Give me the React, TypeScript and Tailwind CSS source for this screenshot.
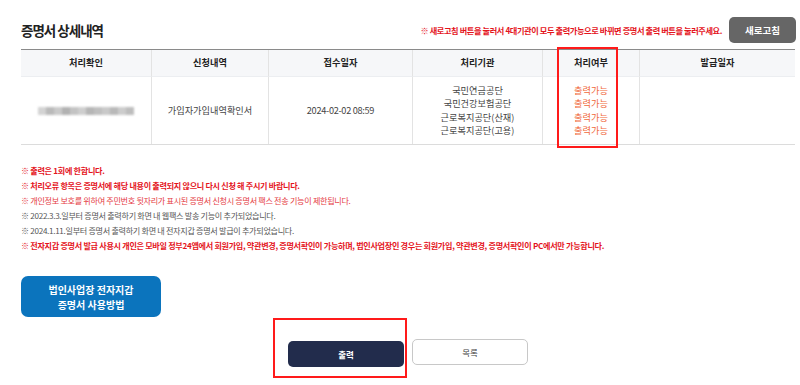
const font = "font-['Noto_Sans_CJK_KR','Noto_Sans',sans-serif]";

const agencies = ["국민연금공단", "국민건강보험공단", "근로복지공단(산재)", "근로복지공단(고용)"];

const notes: { text: string; cls: string }[] = [
  { text: "※ 출력은 1회에 한합니다.", cls: "text-[#e4141c] font-bold" },
  { text: "※ 처리오류 항목은 증명서에 해당 내용이 출력되지 않으니 다시 신청 해 주시기 바랍니다.", cls: "text-[#e4141c] font-bold" },
  { text: "※ 개인정보 보호를 위하여 주민번호 뒷자리가 표시된 증명서 신청시 증명서 팩스 전송 기능이 제한됩니다.", cls: "text-[#e53a3f]" },
  { text: "※ 2022.3.3.일부터 증명서 출력하기 화면 내 웹팩스 발송 기능이 추가되었습니다.", cls: "text-[#555]" },
  { text: "※ 2024.1.11.일부터 증명서 출력하기 화면 내 전자지갑 증명서 발급이 추가되었습니다.", cls: "text-[#555]" },
  {
    text: "※ 전자지갑 증명서 발급 사용시 개인은 모바일 정부24앱에서 회원가입, 약관변경, 증명서확인이 가능하며, 법인사업장인 경우는 회원가입, 약관변경, 증명서확인이 PC에서만 가능합니다.",
    cls: "text-[#e4141c] font-bold",
  },
];

const redacted = ["#c9c9c9", "#a9a9a9", "#bdbdbd", "#9f9f9f", "#b5b5b5", "#c3c3c3", "#a4a4a4", "#b0b0b0", "#bcbcbc", "#a8a8a8", "#c0c0c0", "#adadad"];

export default function App() {
  return (
    <div className={`${font} w-[800px] h-[385px] bg-white overflow-hidden`}>
      <div className="ml-[21px] w-[774px]">
        {/* heading row */}
        <div className="flex items-center h-[26px] mt-[17px]">
          <h1 className="text-[13.5px] font-bold text-[#222] tracking-[-1px]">증명서 상세내역</h1>
          <p className="ml-auto text-[8.2px] font-bold text-[#e4141c] tracking-[-0.4px]">
            ※ 새로고침 버튼을 눌러서 4대기관이 모두 출력가능으로 바뀌면 증명서 출력 버튼을 눌러주세요.
          </p>
          <button className="ml-[7px] mr-[-1px] w-[67px] h-[26px] rounded-[5px] bg-[#666] text-white text-[9.5px] font-bold">
            새로고침
          </button>
        </div>

        {/* table */}
        <div className="relative mt-[6px]">
          <div className="grid grid-cols-[130px_117px_144px_130px_97px_156px] border-t border-[#8a8a8a] border-b border-b-[#dcdcdc] text-[9.2px]">
            {["처리확인", "신청내역", "접수일자", "처리기관", "처리여부", "발급일자"].map((h, i) => (
              <div
                key={h}
                className={`h-[27px] flex items-center justify-center bg-[#f6f7f9] font-bold text-[#222] border-b border-[#eceef1] ${
                  i > 0 ? "border-l border-l-[#e3e3e3]" : ""
                }`}
              >
                {h}
              </div>
            ))}
            <div className="h-[67px] flex items-center justify-center">
              <div className="flex w-[97px] h-[8px] blur-[1px] opacity-80">
                {redacted.map((c, i) => (
                  <span key={i} className="flex-1" style={{ backgroundColor: c }} />
                ))}
              </div>
            </div>
            <div className="flex items-center justify-center border-l border-[#e3e3e3] text-[#444]">가입자가입내역확인서</div>
            <div className="flex items-center justify-center border-l border-[#e3e3e3] text-[#444] tracking-[-0.3px]">2024-02-02 08:59</div>
            <div className="flex flex-col items-center justify-center border-l border-[#e3e3e3] text-[#444] leading-[13.5px]">
              {agencies.map((a) => (
                <span key={a}>{a}</span>
              ))}
            </div>
            <div className="flex flex-col items-center justify-center border-l border-[#e3e3e3] text-[#f0683a] leading-[13.5px]">
              {agencies.map((a) => (
                <span key={a}>출력가능</span>
              ))}
            </div>
            <div className="border-l border-[#e3e3e3]" />
          </div>
          <span className="absolute left-[536px] top-[-2px] w-[61px] h-[101px] border-2 border-[#ff1a1a]" />
        </div>

        {/* notes */}
        <ul className="mt-[18px] text-[8.1px] leading-[15px] tracking-[-0.3px]">
          {notes.map((n) => (
            <li key={n.text} className={n.cls}>
              {n.text}
            </li>
          ))}
        </ul>

        <button className="mt-[23px] w-[140px] h-[41px] rounded-[7px] bg-[#0b74bd] text-white text-[10px] font-bold leading-[15px]">
          법인사업장 전자지갑
          <br />
          증명서 사용방법
        </button>

        {/* bottom buttons */}
        <div className="mt-[22px] flex justify-center gap-[8px]">
          <div className="relative">
            <button className="w-[116px] h-[26px] rounded-[5px] bg-[#222c4c] text-white text-[8.5px] font-bold">출력</button>
            <span className="absolute left-[-15px] top-[-21px] right-[-3px] bottom-[-11px] border-2 border-[#ff1a1a]" />
          </div>
          <button className="w-[116px] h-[26px] rounded-[5px] bg-white border border-[#c8c8c8] text-[#444] text-[8.5px]">
            목록
          </button>
        </div>
      </div>
    </div>
  );
}
